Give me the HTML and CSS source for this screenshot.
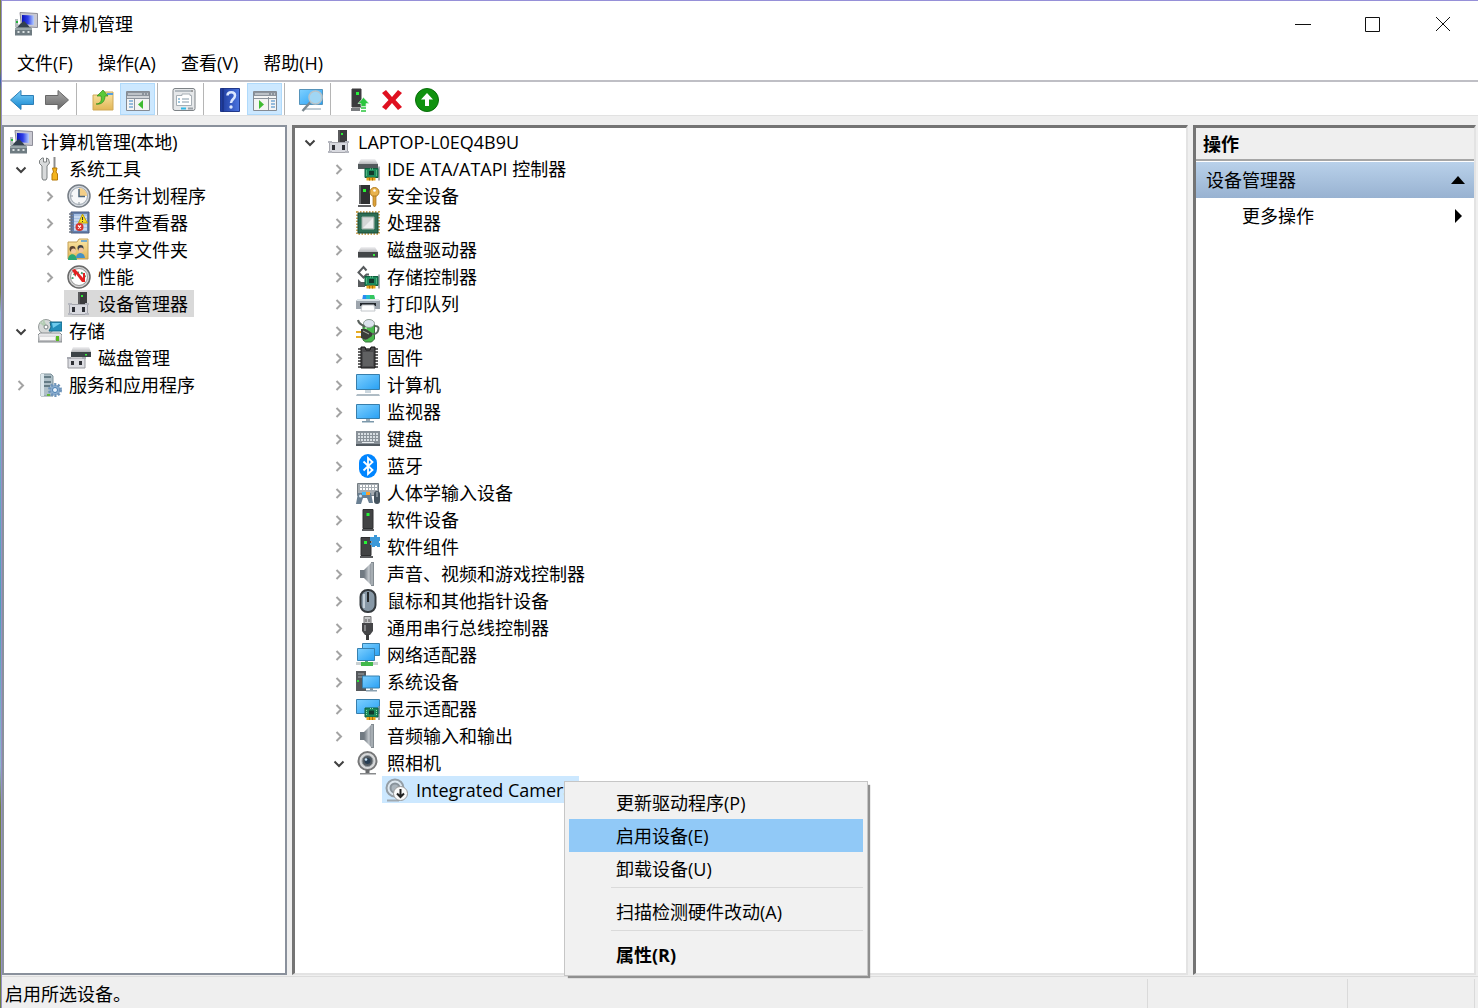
FILE: index.html
```html
<!DOCTYPE html>
<html lang="zh-CN">
<head>
<meta charset="utf-8">
<title>计算机管理</title>
<link rel="stylesheet" href="styles.css">
</head>
<body>
<svg class="defs" aria-hidden="true">
<defs>
<linearGradient id="gScreen" x1="0" y1="0" x2="1" y2="1"><stop offset="0" stop-color="#7ed0ff"/><stop offset="1" stop-color="#28a0f4"/></linearGradient>
<linearGradient id="gNavy" x1="0" y1="0" x2="1" y2="0"><stop offset="0" stop-color="#0a12b8"/><stop offset=".5" stop-color="#3040e8"/><stop offset="1" stop-color="#b8d0ff"/></linearGradient>
<linearGradient id="gMetal" x1="0" y1="0" x2="0" y2="1"><stop offset="0" stop-color="#f2f2f4"/><stop offset="1" stop-color="#b4b5b8"/></linearGradient>
<linearGradient id="gCone" x1="0" y1="0" x2="1" y2="0"><stop offset="0" stop-color="#6f7880"/><stop offset=".7" stop-color="#c3c8cd"/><stop offset="1" stop-color="#8b9299"/></linearGradient>
<linearGradient id="gBlue" x1="0" y1="0" x2="0" y2="1"><stop offset="0" stop-color="#7fd0f8"/><stop offset="1" stop-color="#0f83cf"/></linearGradient>
<linearGradient id="gGray" x1="0" y1="0" x2="0" y2="1"><stop offset="0" stop-color="#aaa"/><stop offset="1" stop-color="#666"/></linearGradient>
<linearGradient id="gFolder" x1="0" y1="0" x2="0" y2="1"><stop offset="0" stop-color="#fbe6a6"/><stop offset="1" stop-color="#e2b656"/></linearGradient>
<linearGradient id="gHelp" x1="0" y1="0" x2="1" y2="0"><stop offset="0" stop-color="#1d3a9c"/><stop offset="1" stop-color="#4a74e0"/></linearGradient>
</defs>
<symbol id="expand" viewBox="0 0 20 20"><path d="M7.500 6l4.500 4.500-4.500 4.500" fill="none" stroke="#a3a3a3" stroke-width="2"/></symbol>
<symbol id="collapse" viewBox="0 0 20 20"><path d="M5.500 8.500l4.500 4.500 4.500-4.500" fill="none" stroke="#404040" stroke-width="2"/></symbol>
<symbol id="board" viewBox="0 0 16 14"><path d="M15 0v14" stroke="#8a9298" stroke-width="1.500"/><path d="M1 2h13v9H1z" fill="#1d8a5c" stroke="#0e5f3e"/><path d="M5 4.500h5v4H5z" fill="#12382b"/><path d="M2.500 4v5M12.500 4v5M6 2.500h4" stroke="#8ee0a8" stroke-dasharray="1 1"/><path d="M2.500 11h9v3h-9z" fill="#e8a51c"/><path d="M5.500 11v3M8.500 11v3" stroke="#a86d08"/></symbol>
<symbol id="compmgmt" viewBox="0 0 24 24"><path d="M6 .5l17.500 1v14l-16-1z" fill="#c9c9d2" stroke="#8d8d98"/><path d="M8 3l12 .5v9.500L8 12z" fill="url(#gNavy)"/><path d="M1 7h3v5l3 3H1z" fill="#b6bdc0"/><path d="M2 9h2v2H2z" fill="#24b33b"/><path d="M6 12l4-3 4 4 2 3H3z" fill="#33414e"/><path d="M1 16l2-1h13l2 1v7.500H1z" fill="#6e7b81"/><path d="M1 16h17v2H1z" fill="#98a5a9"/><path d="M4.500 19v2M9.500 19v2M14.500 19v2" stroke="#dbe2e3" stroke-width="2"/></symbol>
<symbol id="tools" viewBox="0 0 24 24"><path d="M4 1L1.500 3.500v3L4 9v12l1 2h3l1-2V9l2.500-3-1-4L8.500 1v4h-3V1z" fill="#d8dadb" stroke="#7d8182"/><path d="M16.500 0v11" stroke="#8d8d8d" stroke-width="2"/><path d="M14.500 11h4.500l-1 4 1.500 2v6h-5.500v-6l1.500-2z" fill="#f4b41c" stroke="#b57805"/></symbol>
<symbol id="clock" viewBox="0 0 24 24"><circle cx="12" cy="12" r="11" fill="#d5dae0" stroke="#777e86" stroke-width="1.500"/><circle cx="12" cy="12" r="8.500" fill="#f7f8f9" stroke="#9ca5ae"/><path d="M12 12V4a8 8 0 0 1 8 8z" fill="#f3ce87"/><path d="M12 5v7.500h6" fill="none" stroke="#4e667b" stroke-width="1.500"/><path d="M12 18v2M4 12h2" stroke="#8a949c"/></symbol>
<symbol id="events" viewBox="0 0 24 24"><path d="M4 1h18v21H4z" fill="#6480ad" stroke="#4b5d82"/><path d="M7 3h13v17H7z" fill="#a8c2e6"/><path d="M7 6h13M7 9h13M7 12h13M7 15h13M7 18h13" stroke="#e4eefa"/><path d="M2 3h4M2 6h4M2 9h4M2 12h4M2 15h4M2 18h4M2 21h4" stroke="#6d7681" stroke-width="1.500"/><path d="M15.500 3l5 9h-9z" fill="#f5dc25" stroke="#bd9d0b"/><path d="M15.500 6v3M15.500 10v1" stroke="#333"/><circle cx="12.500" cy="16" r="4" fill="#d8332c"/><path d="M11 14.500l3 3M14 14.500l-3 3" stroke="#fff" stroke-width="1.300"/></symbol>
<symbol id="shared" viewBox="0 0 24 24"><path d="M1 4h9l2-3h9v20H1z" fill="url(#gFolder)" stroke="#c5a055"/><path d="M14 3h6" stroke="#4d9ada" stroke-width="1.500"/><path d="M1 22c0-7 8-8 9 0z" fill="#2aa873"/><path d="M9 20c0-6 8-7 9 0z" fill="#4791c4"/><circle cx="5.500" cy="11" r="3" fill="#5b4330"/><circle cx="6.500" cy="13" r="2.500" fill="#f1c9a0"/><circle cx="13.500" cy="10" r="3" fill="#3d4048"/><circle cx="14" cy="12" r="2.500" fill="#efc39c"/></symbol>
<symbol id="gauge" viewBox="0 0 24 24"><circle cx="12" cy="12" r="11" fill="#d5d5d5" stroke="#696969" stroke-width="1.500"/><circle cx="12" cy="12" r="8.500" fill="#fff" stroke="#999"/><path d="M5.500 14a6.500 6.500 0 1 1 13 0" fill="none" stroke="#539c73" stroke-width="2" stroke-dasharray="2 2"/><path d="M5 5l3-1 8 9V8h2v9h-3L9 9v3z" fill="#e32020"/></symbol>
<symbol id="devmgr" viewBox="0 0 24 24"><path d="M11 0h9v12h-9z" fill="#3b3b3d"/><path d="M11 0h2v12h-2z" fill="#5a5a5c"/><path d="M14 3h2v2h-2z" fill="#2bee34"/><path d="M2.500 12.500h18v10h-18z" fill="#d8d9df" stroke="#a5a6ad"/><path d="M5 15h3v5H5zM15 15h3v5h-3z" fill="#2e3036"/><path d="M1 11h4v2H1zM18 11h4v2h-4zM1 21h4v2H1zM18 21h4v2h-4z" fill="#b5b7bf"/></symbol>
<symbol id="storage" viewBox="0 0 24 24"><circle cx="8" cy="8" r="7.500" fill="#d6d9d8" stroke="#959b9a"/><path d="M8 8L2 3M8 8l-3-7" stroke="#b4cdb4" stroke-width="2"/><circle cx="8" cy="8" r="2" fill="#fff" stroke="#7b8484"/><path d="M12 3h12v9H11l2-4z" fill="#238fbb" stroke="#186987"/><path d="M14 4h9l-8 5z" fill="#6dcbed"/><path d="M2 14h20l2 2v7H0v-7z" fill="url(#gMetal)" stroke="#888d90"/><path d="M2 18h15v3H2z" fill="#f7f7f7"/><path d="M18 17h3v5h-3z" fill="#5aba23"/></symbol>
<symbol id="diskmgmt" viewBox="0 0 24 24"><path d="M6 1h16l2 5H4z" fill="url(#gMetal)"/><path d="M4 6h20v5H4z" fill="#3c4347"/><path d="M18 8h2v1.500h-2z" fill="#35f03c"/><path d="M1 12h17v10H1z" fill="#dcdde2" stroke="#96979d"/><path d="M4 15h3v4H4zM12 15h3v4h-3z" fill="#2e3036"/><path d="M0 11h4v2H0zM15 11h4v2h-4z" fill="#a6a8b0"/></symbol>
<symbol id="services" viewBox="0 0 24 24"><path d="M3 1h10l2 2v20H3z" fill="#aebfc7" stroke="#7e929b"/><path d="M3 1h3v22H3z" fill="#dde8ed"/><path d="M6 4h7M6 9h7M6 13h6" stroke="#4e6772" stroke-width="1.500"/><circle cx="17" cy="17" r="5.500" fill="#8caed0" stroke="#6e94ba" stroke-width="3" stroke-dasharray="2 1.500"/><circle cx="17" cy="17" r="2.500" fill="#e9f4fe" stroke="#4a7eb0"/><path d="M9 21h3v2H9z" fill="#66b73c"/></symbol>
<symbol id="ide" viewBox="0 0 24 24"><path d="M5 2h14l3 5H2z" fill="url(#gMetal)"/><path d="M2 7h20v5H2z" fill="#53595c"/><use href="#board" x="8" y="9" width="16" height="15"/></symbol>
<symbol id="security" viewBox="0 0 24 24"><path d="M3 1h11v19H3z" fill="#303132"/><path d="M3 1h2v19H3z" fill="#646668"/><path d="M7 5h3v3H7z" fill="#28f431"/><path d="M2 21h13v2H2z" fill="#606163"/><circle cx="18.500" cy="8" r="4.500" fill="#e9b34e" stroke="#b07d22"/><circle cx="18.500" cy="6.500" r="1.300" fill="#fff"/><path d="M17 12h3v9l-1.500 2-1.500-2z" fill="#dca13a" stroke="#a6731d" stroke-width=".7"/></symbol>
<symbol id="cpu" viewBox="0 0 24 24"><path d="M1 1h22v22H1z" fill="none" stroke="#c9a35a" stroke-width="2" stroke-dasharray="1.500 1.500"/><path d="M2 2h20v20H2z" fill="#2c6e54" stroke="#174b36"/><path d="M6 6h12v12H6z" fill="#d5d7d6" stroke="#a1b3a9"/><path d="M7 17L17 7v10z" fill="#efefef"/></symbol>
<symbol id="disk" viewBox="0 0 24 24"><path d="M5 9h14l3 5H2z" fill="url(#gMetal)"/><path d="M2 14h20v6H2z" fill="#434648"/><path d="M2 19.500h20" stroke="#898c8e"/><path d="M17 16h2v2h-2z" fill="#37ef3f"/></symbol>
<symbol id="storctl" viewBox="0 0 24 24"><path d="M10.500 5.500L7.500 2 2.500 7.500l5 5 3-3H13" fill="none" stroke="#575b5d" stroke-width="2"/><path d="M2 14l3 3h4v5H2z" fill="#575b5d"/><use href="#board" x="8" y="9" width="16" height="15"/></symbol>
<symbol id="printer" viewBox="0 0 24 24"><path d="M7 3h11l1 6H6z" fill="#2b8af3"/><path d="M10 3h5v5h-5z" fill="#22bcc9"/><path d="M14 3h4l1 4h-5z" fill="#35c75e"/><path d="M2 7h20l2 2v8H0V9z" fill="#9da5ad"/><path d="M1 8h22" stroke="#dce4e8" stroke-width="2"/><path d="M4 11h16v3H4z" fill="#22272c"/><path d="M6 13h12l1 6H5z" fill="#fff" stroke="#c2c6ca"/></symbol>
<symbol id="battery" viewBox="0 0 24 24"><path d="M7 5h11.500v15l-3 3h-6L7 21z" fill="#48b94d" stroke="#37703b"/><path d="M10 7v14" stroke="#a0e49f" stroke-width="2"/><ellipse cx="13" cy="4.500" rx="5.500" ry="4" fill="#dde3ee" stroke="#919e98"/><path d="M19 7c4 0 4 2 3 5s-3 3-7 3" fill="none" stroke="#5d6760" stroke-width="2"/><path d="M2 1c1 5 4 4 7 7" fill="none" stroke="#59615c" stroke-width="2"/><path d="M0 13h6M0 18h6" stroke="#e6ac25" stroke-width="2"/><path d="M5 10h5l6 4v3l-6 4-5-2z" fill="#3c3d39"/><path d="M7 12l6 3" stroke="#b0b2ac"/></symbol>
<symbol id="firmware" viewBox="0 0 24 24"><path d="M2 3h20M2 6h20M2 9h20M2 12h20M2 15h20M2 18h20M2 21h20" stroke="#333" stroke-width="1.500"/><path d="M5 1h4l1 3h4l1-3h4v21H5z" fill="#4b4b4d" stroke="#171717"/><path d="M7 6h10v14H7z" fill="#606162"/></symbol>
<symbol id="computer" viewBox="0 0 24 24"><path d="M.5 1.500h23v15H.5z" fill="url(#gScreen)" stroke="#377eac"/><path d="M9 17h6v3H9z" fill="#cbd7df"/><path d="M1 21h22l1 2H0z" fill="#afbcc5"/></symbol>
<symbol id="monitor" viewBox="0 0 24 24"><path d="M.5 4.500h23v14H.5z" fill="url(#gScreen)" stroke="#377eac"/><path d="M10 19h4v2h-4z" fill="#9eacb6"/><path d="M6 21h12v1.500H6z" fill="#7b98ab"/></symbol>
<symbol id="keyboard" viewBox="0 0 24 24"><path d="M0 4h24v15H0z" fill="#899198"/><path d="M0 17h24v2H0z" fill="#525a61"/><path d="M2 7h20M2 10h20M2 13h20" stroke="#d8dee2" stroke-width="2" stroke-dasharray="2 1"/><path d="M6 15.500h12" stroke="#e8edf0"/></symbol>
<symbol id="bluetooth" viewBox="0 0 24 24"><rect x="3" y="0" width="18" height="24" rx="9" fill="#0085ff"/><path d="M7.500 7.500l9 8.500-4.500 4V4l4.500 4-9 8.500" fill="none" stroke="#fff" stroke-width="1.800"/></symbol>
<symbol id="hid" viewBox="0 0 24 24"><path d="M1.500 2.500h21v12h-21z" fill="#a4abb1" stroke="#747c82"/><path d="M4 5h17M4 8h17" stroke="#fff" stroke-width="2" stroke-dasharray="2 1"/><path d="M2 12h13l2 10h-4l-2-5H7l-2 6H0z" fill="#697f92"/><circle cx="4.500" cy="15" r="1.500" fill="#d9e6ef"/><path d="M10 11h4v3h-4z" fill="#ffa22a"/><path d="M6 11h4v3H6z" fill="#3db8ff"/><rect x="18" y="10" width="6" height="13" rx="3" fill="#45535e"/><path d="M21 11v5" stroke="#bac4cb"/></symbol>
<symbol id="softdev" viewBox="0 0 24 24"><path d="M7 1.500h10v19H7z" fill="#424344" stroke="#2e2f30"/><path d="M10.500 5h3v3h-3z" fill="#25f536"/><path d="M6 21h12v2H6z" fill="#5b5c5e"/></symbol>
<symbol id="softcomp" viewBox="0 0 24 24"><path d="M5 2.500h10v18H5z" fill="#424344" stroke="#2e2f30"/><path d="M8 6h3v3H8z" fill="#25f536"/><path d="M4 21h13v2H4z" fill="#5b5c5e"/><path d="M14 2h4V0h3v2h3v4h-1v2h1v4h-3v-1h-2v1h-3v-2h-2V8h2V6h-2z" fill="#3c99d9"/></symbol>
<symbol id="speaker" viewBox="0 0 24 24"><path d="M4 8h6v8H4z" fill="#717a82"/><path d="M8 8l7-7v22l-7-7z" fill="url(#gCone)"/><path d="M15 0h3v24h-3z" fill="#838b91"/><path d="M16 1v22" stroke="#c9cfd4"/></symbol>
<symbol id="mouse" viewBox="0 0 24 24"><rect x="4.500" y="1" width="15" height="22" rx="7" fill="#8798a6" stroke="#353a3e" stroke-width="2"/><path d="M8 5v14" stroke="#c5d1da" stroke-width="2"/><path d="M12 3v10" stroke="#242729" stroke-width="2"/></symbol>
<symbol id="usb" viewBox="0 0 24 24"><path d="M8 .5h7V8H8z" fill="#c5c6c7" stroke="#727374"/><path d="M10 3v3M13 3v3" stroke="#555"/><path d="M6 7h11v8l-3 4H9l-3-4z" fill="#454648"/><path d="M8 9h2v6H8z" fill="#838486"/><path d="M10 18h3v6h-3z" fill="#3b3c3d"/></symbol>
<symbol id="network" viewBox="0 0 24 24"><path d="M6.500.5h17v12h-17z" fill="url(#gScreen)" stroke="#3781b0"/><path d="M1.500 5.500h17v12h-17z" fill="url(#gScreen)" stroke="#3781b0"/><path d="M9 18h3v2H9z" fill="#5da878"/><path d="M5 19h12v4H5z" fill="#42b84b"/><path d="M0 19h5v3H0zM17 19h5v3h-5z" fill="#cad1d2"/></symbol>
<symbol id="system" viewBox="0 0 24 24"><path d="M0 1h10v20H0z" fill="#55595c"/><path d="M2 4h6M2 7h6" stroke="#a0a6aa"/><path d="M1 10h2v2H1z" fill="#2be637"/><path d="M6.500 6h17v12h-17z" fill="url(#gScreen)" stroke="#3781b0"/><path d="M14 18h3v2h-3z" fill="#7d96a5"/><path d="M10 20h11v1.500H10z" fill="#8ba1b0"/></symbol>
<symbol id="display" viewBox="0 0 24 24"><path d="M.5 2.500h23v14H.5z" fill="url(#gScreen)" stroke="#377eac"/><use href="#board" x="8" y="9" width="16" height="14"/></symbol>
<symbol id="camera" viewBox="0 0 24 24"><circle cx="11.500" cy="10" r="9" fill="#d7d8d9" stroke="#767778" stroke-width="2"/><circle cx="11.500" cy="10" r="5.500" fill="#545b61" stroke="#939a9f"/><circle cx="11.500" cy="10" r="3" fill="#273d52"/><circle cx="10" cy="8.500" r="1.300" fill="#c9e4fb"/><path d="M9.500 19h4v3h-4z" fill="#686a6c"/><path d="M4 22h16v1.500H4z" fill="#888a8c"/></symbol>
<symbol id="cameraoff" viewBox="0 0 24 24"><g opacity=".65"><circle cx="10" cy="10" r="8.500" fill="#e8e9e9" stroke="#777" stroke-width="2"/><circle cx="10" cy="10" r="4.500" fill="#999" stroke="#666" stroke-width="2"/><path d="M2 22.500h12" stroke="#888" stroke-width="2"/></g><circle cx="15.500" cy="15.500" r="7" fill="#fafafa" stroke="#999"/><path d="M15.500 11v8M12 15.500l3.500 3.500 3.500-3.500" fill="none" stroke="#222" stroke-width="2"/></symbol>
<symbol id="back" viewBox="0 0 24 24"><path d="M.5 12L11 2.500v5h12.500v9H11v5z" fill="url(#gBlue)" stroke="#2d7fb6"/></symbol>
<symbol id="forward" viewBox="0 0 24 24"><path d="M23.500 12L13 2.500v5H.5v9H13v5z" fill="url(#gGray)" stroke="#686868"/></symbol>
<symbol id="up" viewBox="0 0 24 24"><path d="M2 7h8l3-3h9v18H2z" fill="url(#gFolder)" stroke="#d0a958"/><path d="M16 6h6" stroke="#559edd" stroke-width="2"/><path d="M5 16c5 0 6-4 5-8H6l6-6 5 6h-3c0 5-3 9-9 8z" fill="#58c938" stroke="#308a19" stroke-width=".7"/></symbol>
<symbol id="treeview" viewBox="0 0 24 24"><path d="M.5 3.500h23v19H.5z" fill="#f4f4f4" stroke="#858b93"/><path d="M1 4h22v4H1z" fill="#8c939c"/><path d="M2 6h14M18 6h1M21 6h1" stroke="#eef1f3"/><path d="M1 9h22" stroke="#aeb4bd"/><path d="M8.500 10v12M1 10.500h22" stroke="#8d949d"/><path d="M3 13h4M3 16h4M3 19h4" stroke="#3682c4"/><path d="M17 12v9l-5-4.500z" fill="#3fbb31"/></symbol>
<symbol id="actionview" viewBox="0 0 24 24"><path d="M.5 3.500h23v19H.5z" fill="#f4f4f4" stroke="#858b93"/><path d="M1 4h22v4H1z" fill="#8c939c"/><path d="M2 6h14M18 6h1M21 6h1" stroke="#eef1f3"/><path d="M15.500 9v13M1 10.500h22" stroke="#8d949d"/><path d="M18 13h4M18 16h4M18 19h4" stroke="#3682c4"/><path d="M6 12v9l5-4.500z" fill="#3fbb31"/></symbol>
<symbol id="props" viewBox="0 0 24 24"><rect x="1" y=".5" width="22" height="22" rx="2" fill="#e6e8ea" stroke="#7d8286"/><path d="M3 3h16" stroke="#b2b9bf" stroke-width="2"/><path d="M20 2v2" stroke="#555"/><path d="M4.500 7.500H10V6h8v1.500h1.500v10h-15z" fill="#fff" stroke="#a7afb5"/><path d="M6 11h2M6 14h2" stroke="#3d8cb8"/><path d="M10 11h7M10 14h7" stroke="#8398a7"/><path d="M9 20.500h5" stroke="#33b9e7" stroke-width="2"/><path d="M16 20.500h5" stroke="#9ca3a8" stroke-width="2"/></symbol>
<symbol id="help" viewBox="0 0 24 24"><path d="M2.500.5h19v23h-19z" fill="url(#gHelp)" stroke="#21398b"/><path d="M5 0v24" stroke="#172a78"/><path d="M9.500 7.500C9.500 3 17 3 17 7.500c0 4-4 3.500-4 7.500" fill="none" stroke="#dce8ff" stroke-width="2.500"/><circle cx="13" cy="19" r="1.700" fill="#dce8ff"/></symbol>
<symbol id="scan" viewBox="0 0 24 24"><path d="M.5 1.500h23v15H.5z" fill="url(#gScreen)" stroke="#5694bb"/><path d="M4 21h18" stroke="#c0ccd4" stroke-width="2"/><path d="M11.500 14l-8 9" stroke="#7b8990" stroke-width="2.500"/><circle cx="16.500" cy="9.500" r="6.500" fill="#a0d6f4" stroke="#b7c4ca" stroke-width="1.500"/></symbol>
<symbol id="update" viewBox="0 0 24 24"><path d="M7 1h9v18H7z" fill="#3a3b3d" stroke="#3e3f40"/><path d="M11 4h3v3h-3z" fill="#28f13b"/><path d="M6 20h9v3H6z" fill="#7a7d80"/><path d="M18.500 9.500l5.500 6h-3v3h-5v-3h-3z" fill="#2bc53e" stroke="#d6f2db" stroke-width=".7"/><path d="M16 20h5M16 23h5" stroke="#2bc53e" stroke-width="1.500"/></symbol>
<symbol id="remove" viewBox="0 0 24 24"><path d="M2 5l4-3 6 7 6-7 4 3-6.500 7 6.500 7-4 3-6-7-6 7-4-3 6.500-7z" fill="#df1020"/></symbol>
<symbol id="enable" viewBox="0 0 24 24"><circle cx="12" cy="12" r="11.500" fill="#10920f" stroke="#086c0a"/><path d="M12 5l6 6.500h-4V18h-4v-6.500H6z" fill="#fff"/></symbol>
</svg>
<div class="window">
<header class="titlebar">
<svg class="icon"><use href="#compmgmt"/></svg>
<h1 class="title">计算机管理</h1>
<div class="controls">
<button class="control" aria-label="最小化"><svg class="glyph" viewBox="0 0 16 16"><path d="M0 8.500h16"/></svg></button>
<button class="control" aria-label="最大化"><svg class="glyph" viewBox="0 0 16 16"><path d="M.5 1.500h14v14H.5z"/></svg></button>
<button class="control" aria-label="关闭"><svg class="glyph" viewBox="0 0 16 16"><path d="M1 1l14 14M15 1L1 15"/></svg></button>
</div>
</header>
<nav class="menubar">
<button class="menu">文件(F)</button><button class="menu">操作(A)</button><button class="menu">查看(V)</button><button class="menu">帮助(H)</button>
</nav>
<div class="toolbar" role="toolbar">
<button class="tool" aria-label="后退"><svg class="icon"><use href="#back"/></svg></button>
<button class="tool" aria-label="前进"><svg class="icon"><use href="#forward"/></svg></button>
<span class="divider"></span>
<button class="tool" aria-label="向上"><svg class="icon"><use href="#up"/></svg></button>
<button class="tool pressed" aria-label="控制台树"><svg class="icon"><use href="#treeview"/></svg></button>
<span class="divider"></span>
<button class="tool" aria-label="属性"><svg class="icon"><use href="#props"/></svg></button>
<span class="divider"></span>
<button class="tool" aria-label="帮助"><svg class="icon"><use href="#help"/></svg></button>
<button class="tool pressed" aria-label="操作窗格"><svg class="icon"><use href="#actionview"/></svg></button>
<span class="divider"></span>
<button class="tool" aria-label="扫描"><svg class="icon"><use href="#scan"/></svg></button>
<span class="divider"></span>
<button class="tool" aria-label="更新"><svg class="icon"><use href="#update"/></svg></button>
<button class="tool" aria-label="卸载"><svg class="icon"><use href="#remove"/></svg></button>
<button class="tool" aria-label="启用"><svg class="icon"><use href="#enable"/></svg></button>
</div>
<main class="panes">
<section class="pane console">
<ul class="tree">
<li><div class="row root"><svg class="icon"><use href="#compmgmt"/></svg><span>计算机管理(本地)</span></div></li>
<li><div class="row"><button class="twisty" aria-label="折叠"><svg><use href="#collapse"/></svg></button><svg class="icon"><use href="#tools"/></svg><span>系统工具</span></div>
<ul class="branch">
<li class="row"><button class="twisty" aria-label="展开"><svg><use href="#expand"/></svg></button><svg class="icon"><use href="#clock"/></svg><span>任务计划程序</span></li>
<li class="row"><button class="twisty" aria-label="展开"><svg><use href="#expand"/></svg></button><svg class="icon"><use href="#events"/></svg><span>事件查看器</span></li>
<li class="row"><button class="twisty" aria-label="展开"><svg><use href="#expand"/></svg></button><svg class="icon"><use href="#shared"/></svg><span>共享文件夹</span></li>
<li class="row"><button class="twisty" aria-label="展开"><svg><use href="#expand"/></svg></button><svg class="icon"><use href="#gauge"/></svg><span>性能</span></li>
<li class="row leaf"><span class="node current"><svg class="icon"><use href="#devmgr"/></svg><span>设备管理器</span></span></li>
</ul></li>
<li><div class="row"><button class="twisty" aria-label="折叠"><svg><use href="#collapse"/></svg></button><svg class="icon"><use href="#storage"/></svg><span>存储</span></div>
<ul class="branch">
<li class="row leaf"><span class="node"><svg class="icon"><use href="#diskmgmt"/></svg><span>磁盘管理</span></span></li>
</ul></li>
<li><div class="row"><button class="twisty" aria-label="展开"><svg><use href="#expand"/></svg></button><svg class="icon"><use href="#services"/></svg><span>服务和应用程序</span></div></li>
</ul>
</section>
<section class="pane sunken devices">
<ul class="tree">
<li><div class="row"><button class="twisty" aria-label="折叠"><svg><use href="#collapse"/></svg></button><svg class="icon"><use href="#devmgr"/></svg><span>LAPTOP-L0EQ4B9U</span></div>
<ul class="branch">
<li class="row"><button class="twisty" aria-label="展开"><svg><use href="#expand"/></svg></button><svg class="icon"><use href="#ide"/></svg><span>IDE ATA/ATAPI 控制器</span></li>
<li class="row"><button class="twisty" aria-label="展开"><svg><use href="#expand"/></svg></button><svg class="icon"><use href="#security"/></svg><span>安全设备</span></li>
<li class="row"><button class="twisty" aria-label="展开"><svg><use href="#expand"/></svg></button><svg class="icon"><use href="#cpu"/></svg><span>处理器</span></li>
<li class="row"><button class="twisty" aria-label="展开"><svg><use href="#expand"/></svg></button><svg class="icon"><use href="#disk"/></svg><span>磁盘驱动器</span></li>
<li class="row"><button class="twisty" aria-label="展开"><svg><use href="#expand"/></svg></button><svg class="icon"><use href="#storctl"/></svg><span>存储控制器</span></li>
<li class="row"><button class="twisty" aria-label="展开"><svg><use href="#expand"/></svg></button><svg class="icon"><use href="#printer"/></svg><span>打印队列</span></li>
<li class="row"><button class="twisty" aria-label="展开"><svg><use href="#expand"/></svg></button><svg class="icon"><use href="#battery"/></svg><span>电池</span></li>
<li class="row"><button class="twisty" aria-label="展开"><svg><use href="#expand"/></svg></button><svg class="icon"><use href="#firmware"/></svg><span>固件</span></li>
<li class="row"><button class="twisty" aria-label="展开"><svg><use href="#expand"/></svg></button><svg class="icon"><use href="#computer"/></svg><span>计算机</span></li>
<li class="row"><button class="twisty" aria-label="展开"><svg><use href="#expand"/></svg></button><svg class="icon"><use href="#monitor"/></svg><span>监视器</span></li>
<li class="row"><button class="twisty" aria-label="展开"><svg><use href="#expand"/></svg></button><svg class="icon"><use href="#keyboard"/></svg><span>键盘</span></li>
<li class="row"><button class="twisty" aria-label="展开"><svg><use href="#expand"/></svg></button><svg class="icon"><use href="#bluetooth"/></svg><span>蓝牙</span></li>
<li class="row"><button class="twisty" aria-label="展开"><svg><use href="#expand"/></svg></button><svg class="icon"><use href="#hid"/></svg><span>人体学输入设备</span></li>
<li class="row"><button class="twisty" aria-label="展开"><svg><use href="#expand"/></svg></button><svg class="icon"><use href="#softdev"/></svg><span>软件设备</span></li>
<li class="row"><button class="twisty" aria-label="展开"><svg><use href="#expand"/></svg></button><svg class="icon"><use href="#softcomp"/></svg><span>软件组件</span></li>
<li class="row"><button class="twisty" aria-label="展开"><svg><use href="#expand"/></svg></button><svg class="icon"><use href="#speaker"/></svg><span>声音、视频和游戏控制器</span></li>
<li class="row"><button class="twisty" aria-label="展开"><svg><use href="#expand"/></svg></button><svg class="icon"><use href="#mouse"/></svg><span>鼠标和其他指针设备</span></li>
<li class="row"><button class="twisty" aria-label="展开"><svg><use href="#expand"/></svg></button><svg class="icon"><use href="#usb"/></svg><span>通用串行总线控制器</span></li>
<li class="row"><button class="twisty" aria-label="展开"><svg><use href="#expand"/></svg></button><svg class="icon"><use href="#network"/></svg><span>网络适配器</span></li>
<li class="row"><button class="twisty" aria-label="展开"><svg><use href="#expand"/></svg></button><svg class="icon"><use href="#system"/></svg><span>系统设备</span></li>
<li class="row"><button class="twisty" aria-label="展开"><svg><use href="#expand"/></svg></button><svg class="icon"><use href="#display"/></svg><span>显示适配器</span></li>
<li class="row"><button class="twisty" aria-label="展开"><svg><use href="#expand"/></svg></button><svg class="icon"><use href="#speaker"/></svg><span>音频输入和输出</span></li>
<li><div class="row"><button class="twisty" aria-label="折叠"><svg><use href="#collapse"/></svg></button><svg class="icon"><use href="#camera"/></svg><span>照相机</span></div>
<ul class="branch">
<li class="row leaf"><span class="node selected"><svg class="icon"><use href="#cameraoff"/></svg><span>Integrated Camera</span></span>
<div class="context" role="menu">
<button class="command" role="menuitem">更新驱动程序(P)</button>
<button class="command hot" role="menuitem">启用设备(E)</button>
<button class="command" role="menuitem">卸载设备(U)</button>
<hr class="rule">
<button class="command" role="menuitem">扫描检测硬件改动(A)</button>
<hr class="rule">
<button class="command default" role="menuitem">属性(R)</button>
</div></li>
</ul></li>
</ul></li>
</ul>
</section>
<aside class="pane sunken actions">
<h2 class="heading">操作</h2>
<button class="group">设备管理器<svg class="arrow" viewBox="0 0 16 16"><path d="M1 12h14L8 4z"/></svg></button>
<button class="more">更多操作<svg class="arrow" viewBox="0 0 16 16"><path d="M5 1v14l7-7z"/></svg></button>
</aside>
</main>
<footer class="status"><span class="message">启用所选设备。</span><span class="cell"></span><span class="cell last"></span></footer>
</div>
</body>
</html>
```
FILE: styles.css
```css
* { box-sizing: border-box; }
body {
  margin: 0;
  padding-left: 1px;
  background: linear-gradient(#77803f 0 7%, #3b62b4 8%, #77803f 9% 29%, #8db6cf 31%, #4f9cba 60%, #8db6cf 76%, #6f8040 80%);
  color: #000;
  font: 18px/26px "Open Sans", "Noto Sans CJK SC", sans-serif;
}
button {
  margin: 0;
  padding: 0;
  border: 0;
  background: none;
  color: inherit;
  font: inherit;
  text-align: left;
}
ul { margin: 0; padding: 0; list-style: none; }
.defs { position: absolute; width: 0; height: 0; }
.icon { display: block; flex: none; width: 24px; height: 24px; }

.window {
  display: flex;
  flex-direction: column;
  min-height: 100vh;
  border-top: 1px solid #9690d8;
  border-left: 1px solid #9690c8;
  background: #efefef;
}

.titlebar { display: flex; align-items: center; height: 45px; padding-left: 12px; background: #fff; }
.title { flex: 1; margin: 0 0 0 5px; font-size: 18px; font-weight: 400; }
.controls { display: flex; align-self: stretch; }
.control { display: flex; align-items: center; justify-content: center; width: 70px; }
.glyph { width: 16px; height: 16px; fill: none; stroke: #111; }

.menubar { display: flex; gap: 1px; height: 34px; padding-left: 3px; background: #fff; }
.menu { padding: 0 12px; }

.toolbar {
  display: flex;
  height: 36px;
  padding: 1px 0 0 2px;
  border-top: 2px solid #bfbfc5;
  border-bottom: 1px solid #e2e2e2;
  background: #fff;
}
.tool { display: flex; align-items: center; justify-content: center; width: 35px; padding-top: 1px; border: 1px solid transparent; }
.pressed { border-color: #b0dafb; background: #cce8ff; }
.divider { width: 1px; margin: 0 8px 0 2px; background: #b5b5b5; }

.panes {
  display: grid;
  flex: 1;
  grid-template-columns: 285px minmax(0, 1fr) 283px;
  gap: 5px;
  padding: 9px 2px 1px 0;
}
.pane { background: #fff; }
.console { border: 2px solid #8a919c; }
.console .tree { padding: 1px 0 0 7px; }
.sunken {
  border: 3px solid #e3e3e3;
  border-top-color: #747474;
  border-left-color: #747474;
}
.devices .tree { padding: 0 0 0 5px; }
.devices, .actions { border-right-width: 2px; border-bottom-width: 2px; }

.row { position: relative; display: flex; align-items: center; gap: 7px; height: 27px; white-space: nowrap; }
.root { gap: 8px; margin-left: -2px; }
.branch { padding-left: 29px; }
.twisty, .twisty svg { display: block; flex: none; width: 20px; height: 20px; }
.leaf { padding-left: 24px; }
.node { display: flex; align-items: center; gap: 7px; height: 27px; padding: 0 6px 0 3px; }
.current { background: #d9d9d9; }
.selected { background: #cce8ff; }

.context {
  position: absolute;
  z-index: 2;
  top: 5px;
  left: 206px;
  width: 304px;
  padding: 4px;
  border: 1px solid #c6c6c6;
  background: #f1f1f1;
  box-shadow: 3px 3px 1px -1px #909090;
}
.command { display: block; width: 100%; height: 33px; padding-left: 47px; }
.hot { background: #91c9f7; }
.default { font-weight: 700; }
.rule { height: 1px; margin: 2px 0 7px 42px; border: 0; background: #dadada; }

.heading {
  margin: 0;
  padding: 3px 7px 2px;
  border-bottom: 2px solid #a6a6a6;
  background: #efefef;
  font-size: 18px;
  line-height: 26px;
}
.group, .more { display: flex; align-items: center; justify-content: space-between; width: 100%; height: 36px; padding: 0 8px 0 10px; }
.group { margin-top: 1px; background: linear-gradient(#b9d1ea, #98b2d1); }
.more { padding-left: 46px; }
.arrow { width: 16px; height: 16px; }

.status { display: flex; height: 32px; padding-right: 3px; border-top: 1px solid #dcdcdc; }
.message { flex: 1; padding: 4px 3px 0; }
.cell { width: 200px; margin-top: 2px; border-left: 1px solid #dadada; }
.last { width: 128px; border-right: 1px solid #dadada; }
```
